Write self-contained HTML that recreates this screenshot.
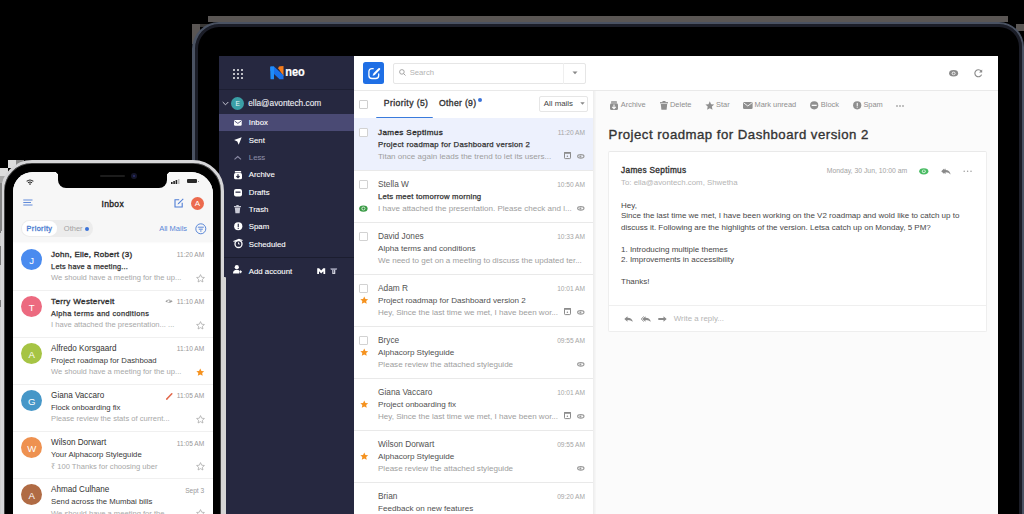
<!DOCTYPE html>
<html><head><meta charset="utf-8"><style>
html,body{margin:0;padding:0;background:#000;}
body{width:1024px;height:514px;position:relative;overflow:hidden;font-family:"Liberation Sans",sans-serif;}
.t{position:absolute;white-space:nowrap;line-height:1;}
svg{overflow:visible}
</style></head><body>
<div style="position:absolute;left:208px;top:16px;width:800px;height:6px;background:#5a5654"></div>
<div style="position:absolute;left:192px;top:24px;width:8px;height:20px;background:#5a5654"></div>
<div style="position:absolute;left:200px;top:24px;width:8px;height:3px;background:#3a3836"></div>
<div style="position:absolute;left:1016px;top:24px;width:8px;height:7px;background:#5a5654"></div>
<div style="position:absolute;left:192px;top:22px;width:827px;height:600px;border:2px solid #4a5262;border-left-width:3.5px;border-right-width:2.5px;border-radius:27px 25px 0 0;background:#000;box-shadow:inset 0 0 0 3px #1b1d27"></div>
<div style="position:absolute;left:219px;top:56px;width:135px;height:458px;background:#262840"></div>
<div style="position:absolute;left:219px;top:88.5px;width:135px;height:1.5px;background:#1d1f33"></div>
<svg style="position:absolute;left:233px;top:68.5px;" width="10" height="10" viewBox="0 0 10 10"><circle cx="1" cy="1" r="0.95" fill="#fff"/><circle cx="5" cy="1" r="0.95" fill="#fff"/><circle cx="9" cy="1" r="0.95" fill="#fff"/><circle cx="1" cy="5" r="0.95" fill="#fff"/><circle cx="5" cy="5" r="0.95" fill="#fff"/><circle cx="9" cy="5" r="0.95" fill="#fff"/><circle cx="1" cy="9" r="0.95" fill="#fff"/><circle cx="5" cy="9" r="0.95" fill="#fff"/><circle cx="9" cy="9" r="0.95" fill="#fff"/></svg>
<svg style="position:absolute;left:269.5px;top:65.5px;" width="14" height="14" viewBox="0 0 14 14"><path d="M8.3 2.2 Q8.3 0.5 10 0.3 L13.5 0.1 L13.5 10.2Z" fill="#f47c1c"/><path d="M0.3 0.6 L4 0.6 L13.5 9.3 L13.5 13.2 L9.6 13.2 L0.3 4.6Z" fill="#1a72ea"/><path d="M0.2 1.4 Q0.2 0.5 1.1 0.5 L4 0.5 L4 13.3 L1.2 13.3 Q0.5 13.3 0.5 12.4Z" fill="#1f8cf8"/></svg>
<div class="t" style="left:285.20px;top:67px;font-size:11.0px;color:#fff;font-weight:700;transform:scale(1.0,1.14);transform-origin:0 9px;-webkit-text-stroke:0.2px #fff">neo</div>
<svg style="position:absolute;left:222px;top:100.5px;" width="7" height="5" viewBox="0 0 7 5"><path d="M0.7 1 L3.5 3.8 L6.3 1" stroke="#c9cad6" stroke-width="1" fill="none"/></svg>
<div style="position:absolute;left:231.2px;top:96.8px;width:13px;height:13px;background:#3a9fa6;border-radius:50%"></div>
<div class="t" style="left:235.20px;top:101px;font-size:6.5px;color:#e9f6f6;font-weight:400;width:5px;text-align:center">E</div>
<div class="t" style="left:248.20px;top:99px;font-size:8.3px;color:#ececf2;font-weight:400;-webkit-text-stroke:0.12px #ececf2">ella@avontech.com</div>
<div style="position:absolute;left:219px;top:114px;width:135px;height:17.2px;background:#4a4a74"></div>
<div class="t" style="left:248.80px;top:119px;font-size:7.8px;color:#fff;font-weight:400;-webkit-text-stroke:0.1px #fff">Inbox</div>
<div class="t" style="left:248.80px;top:137px;font-size:7.8px;color:#fff;font-weight:400;-webkit-text-stroke:0.1px #fff">Sent</div>
<div class="t" style="left:248.80px;top:154px;font-size:7.8px;color:#8c8ca6;font-weight:400;-webkit-text-stroke:0.1px #8c8ca6">Less</div>
<div class="t" style="left:248.80px;top:171px;font-size:7.8px;color:#fff;font-weight:400;-webkit-text-stroke:0.1px #fff">Archive</div>
<div class="t" style="left:248.80px;top:189px;font-size:7.8px;color:#fff;font-weight:400;-webkit-text-stroke:0.1px #fff">Drafts</div>
<div class="t" style="left:248.80px;top:206px;font-size:7.8px;color:#fff;font-weight:400;-webkit-text-stroke:0.1px #fff">Trash</div>
<div class="t" style="left:248.80px;top:223px;font-size:7.8px;color:#fff;font-weight:400;-webkit-text-stroke:0.1px #fff">Spam</div>
<div class="t" style="left:248.80px;top:241px;font-size:7.8px;color:#fff;font-weight:400;-webkit-text-stroke:0.1px #fff">Scheduled</div>
<svg style="position:absolute;left:233.8px;top:120.2px;" width="8" height="6" viewBox="0 0 8 6"><rect x="0" y="0" width="7.7" height="5.7" rx="1.2" fill="#fff"/><path d="M0.6 1 L3.85 3.4 L7.1 1" stroke="#4a4a74" stroke-width="0.9" fill="none"/></svg>
<svg style="position:absolute;left:233.5px;top:136.5px;" width="8" height="8" viewBox="0 0 8 8"><path d="M7.7 0.2 L0.1 3.1 L3.3 4.5 L4.7 7.8Z" fill="#fff"/></svg>
<svg style="position:absolute;left:234px;top:155.5px;" width="8" height="4" viewBox="0 0 8 4"><path d="M0.5 3.4 L3.75 0.6 L7 3.4" stroke="#8c8ca6" stroke-width="1.1" fill="none"/></svg>
<svg style="position:absolute;left:233.5px;top:170.8px;" width="8" height="8.5" viewBox="0 0 8 8.5"><rect x="0.8" y="0" width="6.4" height="1.4" rx="0.5" fill="#fff"/><rect x="0" y="2" width="8" height="6.3" rx="1.5" fill="#fff"/><path d="M4 3.2 V6.6 M2.4 5.1 L4 6.7 L5.6 5.1" stroke="#262840" stroke-width="1.2" fill="none"/></svg>
<svg style="position:absolute;left:233.5px;top:188.8px;" width="8" height="7.5" viewBox="0 0 8 7.5"><rect x="0" y="0" width="8" height="7.4" rx="2" fill="#fff"/><rect x="1.5" y="2.4" width="5" height="1.6" fill="#5a5b70"/></svg>
<svg style="position:absolute;left:234px;top:204.8px;" width="7" height="8.5" viewBox="0 0 7 8.5"><rect x="0" y="1" width="7" height="1.2" fill="#c9cad6"/><rect x="2.3" y="0" width="2.4" height="1.2" fill="#c9cad6"/><path d="M0.8 2.6 H6.2 L5.6 8.3 H1.4Z" fill="#c9cad6"/></svg>
<svg style="position:absolute;left:233.5px;top:222px;" width="8.5" height="8.5" viewBox="0 0 8.5 8.5"><circle cx="4.25" cy="4.25" r="4.1" fill="#fff"/><rect x="3.7" y="1.7" width="1.1" height="3.3" fill="#262840"/><rect x="3.7" y="5.8" width="1.1" height="1.1" fill="#262840"/></svg>
<svg style="position:absolute;left:232.5px;top:239px;" width="10" height="9" viewBox="0 0 10 9"><circle cx="5.5" cy="5" r="3.5" stroke="#fff" stroke-width="1.3" fill="none"/><path d="M0.5 2.5 L6 0.5 L9.5 1.5" stroke="#fff" stroke-width="1.3" fill="none"/><path d="M5.5 3.3 V5 H6.8" stroke="#fff" stroke-width="0.9" fill="none"/></svg>
<div style="position:absolute;left:219px;top:256.8px;width:135px;height:1.2px;background:#1b1d2f"></div>
<div class="t" style="left:248.80px;top:268px;font-size:7.8px;color:#fff;font-weight:400;-webkit-text-stroke:0.1px #fff">Add account</div>
<svg style="position:absolute;left:233px;top:265px;" width="9" height="9" viewBox="0 0 9 9"><circle cx="3.8" cy="2.2" r="2.1" fill="#fff"/><path d="M0 8.5 Q0 4.8 3.8 4.8 Q5.5 4.8 6.3 5.6 L6.3 8.5Z" fill="#fff"/><path d="M6.2 6.8 H9 M7.6 5.4 V8.2" stroke="#fff" stroke-width="1"/></svg>
<svg style="position:absolute;left:316.7px;top:268px;" width="9" height="7" viewBox="0 0 9 7"><path d="M0.2 6.1 V0.2 H2.1 L4.2 2.6 L6.3 0.2 H8.2 V6.1 H6.4 V3.2 L4.2 5.4 L2 3.2 V6.1Z" fill="#fff"/></svg>
<svg style="position:absolute;left:329.9px;top:268.2px;" width="8" height="6" viewBox="0 0 8 6"><path d="M0.3 0.2 H7.2 L6.6 1.9 H0.9Z" fill="#9a9bb0"/><rect x="2.2" y="1.9" width="1.3" height="3.9" fill="#c9cad8"/><rect x="4" y="1.9" width="1.3" height="3.9" fill="#c9cad8"/><path d="M2.2 5.8 H5.3 L3.75 4.8Z" fill="#fff"/></svg>
<div style="position:absolute;left:354px;top:56px;width:644px;height:34px;background:#fff"></div>
<div style="position:absolute;left:354px;top:90px;width:644px;height:1px;background:#e9e9e9"></div>
<div style="position:absolute;left:363px;top:62px;width:21px;height:22px;background:#1f6fe5;border-radius:2.5px"></div>
<svg style="position:absolute;left:367px;top:66px;" width="14" height="14" viewBox="0 0 14 14"><path d="M6.2 2.7 H5 Q1.9 2.7 1.9 5.8 V9.4 Q1.9 12.5 5 12.5 H8.6 Q11.7 12.5 11.7 9.4 V8" stroke="#fff" stroke-width="1.3" fill="none" stroke-linecap="round"/><path d="M7.3 7.9 L12.2 3" stroke="#fff" stroke-width="2.1" stroke-linecap="round"/><path d="M5.6 9.7 L6.1 7.7 L7.6 9.2Z" fill="#fff"/></svg>
<div style="position:absolute;left:393px;top:62.5px;width:192.5px;height:21px;border:1px solid #e6e6e6;border-radius:2px;box-sizing:border-box"></div>
<div style="position:absolute;left:563.2px;top:63px;width:1px;height:20.5px;background:#efefef"></div>
<svg style="position:absolute;left:571.5px;top:70.5px;" width="6" height="4" viewBox="0 0 6 4"><path d="M0.5 0.5 H5.5 L3 3.3Z" fill="#888"/></svg>
<svg style="position:absolute;left:399px;top:69px;" width="7" height="7" viewBox="0 0 7 7"><circle cx="2.9" cy="2.9" r="2.3" stroke="#9a9a9a" stroke-width="0.9" fill="none"/><path d="M4.6 4.6 L6.5 6.5" stroke="#9a9a9a" stroke-width="0.9"/></svg>
<div class="t" style="left:409.70px;top:69px;font-size:7.7px;color:#b3b3b3;font-weight:400;">Search</div>
<svg style="position:absolute;left:948.8px;top:70px;" width="10" height="7" viewBox="0 0 10 7"><ellipse cx="4.6" cy="3.3" rx="4.5" ry="3.2" fill="#8a8a8a"/><circle cx="4.6" cy="3.3" r="1.9" fill="#e8e8e8"/><circle cx="4.6" cy="3.5" r="1" fill="#8a8a8a"/></svg>
<svg style="position:absolute;left:974.3px;top:69.3px;" width="9" height="9" viewBox="0 0 9 9"><path d="M7.2 2.2 A3.5 3.5 0 1 0 7.6 5.6" stroke="#8a8a8a" stroke-width="1.15" fill="none"/><path d="M8.2 0.4 V3.6 H5Z" fill="#8a8a8a"/></svg>
<div style="position:absolute;left:354px;top:91px;width:240px;height:423px;background:#fff"></div>
<div style="position:absolute;left:359.3px;top:100px;width:8.7px;height:8.7px;border:1px solid #cfcfcf;border-radius:1px;box-sizing:border-box"></div>
<div class="t" style="left:383.80px;top:99px;font-size:8.6px;color:#333;font-weight:400;letter-spacing:0.413px;-webkit-text-stroke:0.35px #333;">Priority (5)</div>
<div class="t" style="left:439.10px;top:99px;font-size:8.6px;color:#333;font-weight:400;letter-spacing:0.324px;-webkit-text-stroke:0.35px #333;">Other (9)</div>
<div style="position:absolute;left:477.5px;top:98px;width:4px;height:4px;background:#3b73d9;border-radius:50%"></div>
<div style="position:absolute;left:376px;top:116.5px;width:56.7px;height:2px;background:#3a7bdc;border-radius:1px"></div>
<div style="position:absolute;left:539.2px;top:95.5px;width:48.5px;height:16px;border:1px solid #e6e6e6;border-radius:2px;box-sizing:border-box"></div>
<div class="t" style="left:543.70px;top:100px;font-size:7.9px;color:#444;font-weight:400;">All mails</div>
<svg style="position:absolute;left:579.5px;top:102px;" width="5" height="3" viewBox="0 0 5 3"><path d="M0.3 0.3 H4.7 L2.5 2.7Z" fill="#888"/></svg>
<div style="position:absolute;left:354px;top:118.4px;width:239.5px;height:51.6px;background:#edf1fd"></div>
<div style="position:absolute;left:354px;top:170.0px;width:239.5px;height:0.8px;background:#e9e9e9"></div>
<div style="position:absolute;left:359.3px;top:128.40px;width:8.6px;height:8.4px;border:1px solid #d2d2d2;border-radius:1px;box-sizing:border-box;background:#fff"></div>
<div class="t" style="left:378.00px;top:129px;font-size:8.1px;color:#333;font-weight:400;letter-spacing:0.379px;-webkit-text-stroke:0.35px #333;">James Septimus</div>
<div class="t" style="right:439.00px;text-align:right;top:130px;font-size:6.6px;color:#a6a6a6;font-weight:400;">11:20 AM</div>
<div class="t" style="left:378.00px;top:141px;font-size:7.75px;color:#333;font-weight:400;letter-spacing:0.268px;-webkit-text-stroke:0.25px #333;">Project roadmap for Dashboard version 2</div>
<div class="t" style="left:378.00px;top:153px;font-size:8.05px;color:#9e9e9e;font-weight:400;">Titan once again leads the trend to let its users...</div>
<svg style="position:absolute;left:564px;top:152.1px;" width="7" height="7" viewBox="0 0 7 7"><rect x="0.5" y="0.6" width="6" height="6" rx="0.8" stroke="#8a8a8a" stroke-width="1" fill="none"/><rect x="0" y="0.1" width="7" height="1.7" rx="0.6" fill="#8a8a8a"/><circle cx="3.4" cy="4.3" r="0.75" fill="#8a8a8a"/></svg>
<svg style="position:absolute;left:576.6px;top:153.7px;" width="8" height="5" viewBox="0 0 8 5"><ellipse cx="3.8" cy="2.35" rx="3.2" ry="1.75" stroke="#9a9a9a" stroke-width="1.1" fill="none"/><circle cx="3.4" cy="2.5" r="1" fill="#9a9a9a"/></svg>
<div style="position:absolute;left:354px;top:222.0px;width:239.5px;height:0.8px;background:#e9e9e9"></div>
<div style="position:absolute;left:359.3px;top:180.40px;width:8.6px;height:8.4px;border:1px solid #d2d2d2;border-radius:1px;box-sizing:border-box;background:#fff"></div>
<div class="t" style="left:378.00px;top:180px;font-size:8.3px;color:#525252;font-weight:400;">Stella W</div>
<div class="t" style="right:439.00px;text-align:right;top:182px;font-size:6.6px;color:#a6a6a6;font-weight:400;">10:50 AM</div>
<div class="t" style="left:378.00px;top:193px;font-size:7.75px;color:#333;font-weight:400;letter-spacing:0.182px;-webkit-text-stroke:0.25px #333;">Lets meet tomorrow morning</div>
<div class="t" style="left:378.00px;top:205px;font-size:8.05px;color:#9e9e9e;font-weight:400;">I have attached the presentation. Please check and l...</div>
<svg style="position:absolute;left:359.3px;top:204.5px;" width="9" height="7" viewBox="0 0 9 7"><ellipse cx="4.4" cy="3.6" rx="4.2" ry="3.2" fill="#389a44"/><circle cx="4.4" cy="3.6" r="2" fill="#c8e6c9"/><circle cx="4.5" cy="3.6" r="1.1" fill="#2f8a3b"/></svg>
<svg style="position:absolute;left:576.6px;top:205.7px;" width="8" height="5" viewBox="0 0 8 5"><ellipse cx="3.8" cy="2.35" rx="3.2" ry="1.75" stroke="#9a9a9a" stroke-width="1.1" fill="none"/><circle cx="3.4" cy="2.5" r="1" fill="#9a9a9a"/></svg>
<div style="position:absolute;left:354px;top:274.0px;width:239.5px;height:0.8px;background:#e9e9e9"></div>
<div style="position:absolute;left:359.3px;top:232.40px;width:8.6px;height:8.4px;border:1px solid #d2d2d2;border-radius:1px;box-sizing:border-box;background:#fff"></div>
<div class="t" style="left:378.00px;top:232px;font-size:8.3px;color:#525252;font-weight:400;">David Jones</div>
<div class="t" style="right:439.00px;text-align:right;top:234px;font-size:6.6px;color:#a6a6a6;font-weight:400;">10:33 AM</div>
<div class="t" style="left:378.00px;top:245px;font-size:8.08px;color:#505050;font-weight:400;">Alpha terms and conditions</div>
<div class="t" style="left:378.00px;top:257px;font-size:8.05px;color:#9e9e9e;font-weight:400;">We need to get on a meeting to discuss the updated ter...</div>
<div style="position:absolute;left:354px;top:326.0px;width:239.5px;height:0.8px;background:#e9e9e9"></div>
<div style="position:absolute;left:359.3px;top:284.40px;width:8.6px;height:8.4px;border:1px solid #d2d2d2;border-radius:1px;box-sizing:border-box;background:#fff"></div>
<div class="t" style="left:378.00px;top:284px;font-size:8.3px;color:#525252;font-weight:400;">Adam R</div>
<div class="t" style="right:439.00px;text-align:right;top:286px;font-size:6.6px;color:#a6a6a6;font-weight:400;">10:01 AM</div>
<div class="t" style="left:378.00px;top:297px;font-size:8.08px;color:#505050;font-weight:400;">Project roadmap for Dashboard version 2</div>
<div class="t" style="left:378.00px;top:309px;font-size:8.05px;color:#9e9e9e;font-weight:400;">Hey, Since the last time we met, I have been wor...</div>
<svg style="position:absolute;left:359.5px;top:296.2px;" width="9" height="9" viewBox="0 0 9 9"><path d="M4.25 0.4 L5.45 2.95 L8.2 3.25 L6.15 5.1 L6.7 7.8 L4.25 6.4 L1.8 7.8 L2.35 5.1 L0.3 3.25 L3.05 2.95Z" fill="#f5921f"/></svg>
<svg style="position:absolute;left:564px;top:308.09999999999997px;" width="7" height="7" viewBox="0 0 7 7"><rect x="0.5" y="0.6" width="6" height="6" rx="0.8" stroke="#8a8a8a" stroke-width="1" fill="none"/><rect x="0" y="0.1" width="7" height="1.7" rx="0.6" fill="#8a8a8a"/><circle cx="3.4" cy="4.3" r="0.75" fill="#8a8a8a"/></svg>
<svg style="position:absolute;left:576.6px;top:309.7px;" width="8" height="5" viewBox="0 0 8 5"><ellipse cx="3.8" cy="2.35" rx="3.2" ry="1.75" stroke="#9a9a9a" stroke-width="1.1" fill="none"/><circle cx="3.4" cy="2.5" r="1" fill="#9a9a9a"/></svg>
<div style="position:absolute;left:354px;top:378.0px;width:239.5px;height:0.8px;background:#e9e9e9"></div>
<div style="position:absolute;left:359.3px;top:336.40px;width:8.6px;height:8.4px;border:1px solid #d2d2d2;border-radius:1px;box-sizing:border-box;background:#fff"></div>
<div class="t" style="left:378.00px;top:336px;font-size:8.3px;color:#525252;font-weight:400;">Bryce</div>
<div class="t" style="right:439.00px;text-align:right;top:338px;font-size:6.6px;color:#a6a6a6;font-weight:400;">09:55 AM</div>
<div class="t" style="left:378.00px;top:349px;font-size:8.08px;color:#505050;font-weight:400;">Alphacorp Styleguide</div>
<div class="t" style="left:378.00px;top:361px;font-size:8.05px;color:#9e9e9e;font-weight:400;">Please review the attached styleguide</div>
<svg style="position:absolute;left:359.5px;top:348.2px;" width="9" height="9" viewBox="0 0 9 9"><path d="M4.25 0.4 L5.45 2.95 L8.2 3.25 L6.15 5.1 L6.7 7.8 L4.25 6.4 L1.8 7.8 L2.35 5.1 L0.3 3.25 L3.05 2.95Z" fill="#f5921f"/></svg>
<svg style="position:absolute;left:576.6px;top:361.7px;" width="8" height="5" viewBox="0 0 8 5"><ellipse cx="3.8" cy="2.35" rx="3.2" ry="1.75" stroke="#9a9a9a" stroke-width="1.1" fill="none"/><circle cx="3.4" cy="2.5" r="1" fill="#9a9a9a"/></svg>
<div style="position:absolute;left:354px;top:430.0px;width:239.5px;height:0.8px;background:#e9e9e9"></div>
<div class="t" style="left:378.00px;top:388px;font-size:8.3px;color:#525252;font-weight:400;">Giana Vaccaro</div>
<div class="t" style="right:439.00px;text-align:right;top:390px;font-size:6.6px;color:#a6a6a6;font-weight:400;">10:01 AM</div>
<div class="t" style="left:378.00px;top:401px;font-size:8.08px;color:#505050;font-weight:400;">Project onboarding fix</div>
<div class="t" style="left:378.00px;top:413px;font-size:8.05px;color:#9e9e9e;font-weight:400;">Hey, Since the last time we met, I have been wor...</div>
<svg style="position:absolute;left:359.5px;top:400.2px;" width="9" height="9" viewBox="0 0 9 9"><path d="M4.25 0.4 L5.45 2.95 L8.2 3.25 L6.15 5.1 L6.7 7.8 L4.25 6.4 L1.8 7.8 L2.35 5.1 L0.3 3.25 L3.05 2.95Z" fill="#f5921f"/></svg>
<svg style="position:absolute;left:564px;top:412.09999999999997px;" width="7" height="7" viewBox="0 0 7 7"><rect x="0.5" y="0.6" width="6" height="6" rx="0.8" stroke="#8a8a8a" stroke-width="1" fill="none"/><rect x="0" y="0.1" width="7" height="1.7" rx="0.6" fill="#8a8a8a"/><circle cx="3.4" cy="4.3" r="0.75" fill="#8a8a8a"/></svg>
<svg style="position:absolute;left:576.6px;top:413.7px;" width="8" height="5" viewBox="0 0 8 5"><ellipse cx="3.8" cy="2.35" rx="3.2" ry="1.75" stroke="#9a9a9a" stroke-width="1.1" fill="none"/><circle cx="3.4" cy="2.5" r="1" fill="#9a9a9a"/></svg>
<div style="position:absolute;left:354px;top:482.0px;width:239.5px;height:0.8px;background:#e9e9e9"></div>
<div class="t" style="left:378.00px;top:440px;font-size:8.3px;color:#525252;font-weight:400;">Wilson Dorwart</div>
<div class="t" style="right:439.00px;text-align:right;top:442px;font-size:6.6px;color:#a6a6a6;font-weight:400;">09:55 AM</div>
<div class="t" style="left:378.00px;top:453px;font-size:8.08px;color:#505050;font-weight:400;">Alphacorp Styleguide</div>
<div class="t" style="left:378.00px;top:465px;font-size:8.05px;color:#9e9e9e;font-weight:400;">Please review the attached styleguide</div>
<svg style="position:absolute;left:359.5px;top:452.2px;" width="9" height="9" viewBox="0 0 9 9"><path d="M4.25 0.4 L5.45 2.95 L8.2 3.25 L6.15 5.1 L6.7 7.8 L4.25 6.4 L1.8 7.8 L2.35 5.1 L0.3 3.25 L3.05 2.95Z" fill="#f5921f"/></svg>
<svg style="position:absolute;left:576.6px;top:465.7px;" width="8" height="5" viewBox="0 0 8 5"><ellipse cx="3.8" cy="2.35" rx="3.2" ry="1.75" stroke="#9a9a9a" stroke-width="1.1" fill="none"/><circle cx="3.4" cy="2.5" r="1" fill="#9a9a9a"/></svg>
<div style="position:absolute;left:354px;top:534.0px;width:239.5px;height:0.8px;background:#e9e9e9"></div>
<div class="t" style="left:378.00px;top:492px;font-size:8.3px;color:#525252;font-weight:400;">Brian</div>
<div class="t" style="right:439.00px;text-align:right;top:494px;font-size:6.6px;color:#a6a6a6;font-weight:400;">09:20 AM</div>
<div class="t" style="left:378.00px;top:505px;font-size:8.08px;color:#505050;font-weight:400;">Feedback on new features</div>
<div class="t" style="left:378.00px;top:517px;font-size:8.05px;color:#9e9e9e;font-weight:400;">Please review the attached styleguide</div>
<div style="position:absolute;left:593.3px;top:91px;width:404.7px;height:423px;background:#fbfbfb"></div>
<div style="position:absolute;left:593.3px;top:91px;width:2.7px;height:423px;background:linear-gradient(to right,#ececec,#f8f8f8)"></div>
<svg style="position:absolute;left:610.1px;top:100.5px;" width="10" height="10" viewBox="0 0 10 10"><rect x="1" y="0.3" width="6" height="1.5" rx="0.6" fill="#8f8f8f"/><rect x="0" y="2.2" width="8" height="6.8" rx="1.5" fill="#8f8f8f"/><path d="M4 3.4 V7.6 M2.2 5.9 L4 7.7 L5.8 5.9" stroke="#fafafa" stroke-width="1.1" fill="none"/></svg>
<div class="t" style="left:620.80px;top:101px;font-size:7.45px;color:#8f8f8f;font-weight:400;">Archive</div>
<svg style="position:absolute;left:659.7px;top:100.5px;" width="10" height="10" viewBox="0 0 10 10"><rect x="0" y="1.1" width="8" height="1.3" fill="#8f8f8f"/><rect x="2.5" y="0" width="3" height="1.3" fill="#8f8f8f"/><path d="M0.8 3 H7.2 L6.6 8.8 H1.4Z" fill="#8f8f8f"/></svg>
<div class="t" style="left:670.00px;top:101px;font-size:7.45px;color:#8f8f8f;font-weight:400;">Delete</div>
<svg style="position:absolute;left:704.8px;top:100.5px;" width="10" height="10" viewBox="0 0 10 10"><path d="M4.8 0.3 L6.1 3.2 L9.2 3.5 L6.9 5.6 L7.5 8.8 L4.8 7.2 L2.1 8.8 L2.7 5.6 L0.4 3.5 L3.5 3.2Z" fill="#8f8f8f"/></svg>
<div class="t" style="left:716.10px;top:101px;font-size:7.45px;color:#8f8f8f;font-weight:400;">Star</div>
<svg style="position:absolute;left:742.8px;top:100.5px;" width="10" height="10" viewBox="0 0 10 10"><rect x="0" y="1" width="9.6" height="7" rx="1.2" fill="#8f8f8f"/><path d="M0.6 1.8 L4.8 5 L9 1.8" stroke="#f9f9f9" stroke-width="0.9" fill="none"/></svg>
<div class="t" style="left:754.50px;top:101px;font-size:7.45px;color:#8f8f8f;font-weight:400;">Mark unread</div>
<svg style="position:absolute;left:810px;top:100.5px;" width="10" height="10" viewBox="0 0 10 10"><circle cx="4.2" cy="4.3" r="4.1" fill="#8f8f8f"/><rect x="1.7" y="3.7" width="5" height="1.3" fill="#f9f9f9"/></svg>
<div class="t" style="left:820.80px;top:101px;font-size:7.45px;color:#8f8f8f;font-weight:400;">Block</div>
<svg style="position:absolute;left:852.5px;top:100.5px;" width="10" height="10" viewBox="0 0 10 10"><circle cx="4.2" cy="4.3" r="4.1" fill="#8f8f8f"/><rect x="3.7" y="1.9" width="1.1" height="3.1" fill="#f9f9f9"/><rect x="3.7" y="5.6" width="1.1" height="1.1" fill="#f9f9f9"/></svg>
<div class="t" style="left:863.40px;top:101px;font-size:7.45px;color:#8f8f8f;font-weight:400;">Spam</div>
<svg style="position:absolute;left:896px;top:104.5px;" width="8" height="2" viewBox="0 0 8 2"><circle cx="1" cy="1" r="0.8" fill="#777"/><circle cx="4" cy="1" r="0.8" fill="#777"/><circle cx="7" cy="1" r="0.8" fill="#777"/></svg>
<div class="t" style="left:608.60px;top:128px;font-size:13.2px;color:#333;font-weight:400;letter-spacing:0.487px;-webkit-text-stroke:0.35px #333;">Project roadmap for Dashboard version 2</div>
<div style="position:absolute;left:608px;top:151px;width:378.5px;height:180.5px;background:#fff;border:1px solid #eeeeee;border-top-color:#e9e9e9;border-radius:2px;box-sizing:border-box"></div>
<div class="t" style="left:621.10px;top:167px;font-size:8.25px;color:#333;font-weight:400;letter-spacing:0.309px;-webkit-text-stroke:0.35px #333;">James Septimus</div>
<div class="t" style="left:621.00px;top:179px;font-size:7.85px;color:#b5b5b5;font-weight:400;">To: ella@avontech.com, Shwetha</div>
<div class="t" style="right:116.70px;text-align:right;top:168px;font-size:6.85px;color:#a3a3a3;font-weight:400;">Monday, 30 Jun, 10:00 am</div>
<svg style="position:absolute;left:919px;top:167.8px;" width="10" height="7" viewBox="0 0 10 7"><ellipse cx="4.8" cy="3.3" rx="4.6" ry="3.1" fill="#48bb62"/><circle cx="4.8" cy="3.3" r="1.9" fill="#d4f0da"/><circle cx="4.8" cy="3.3" r="1.05" fill="#48bb62"/></svg>
<svg style="position:absolute;left:941px;top:167.8px;" width="10" height="7" viewBox="0 0 10 7"><path d="M4.6 0.4 L1.4 3.2 L4.6 6 V4.3 Q7.6 4.2 9.6 6.6 Q9 2.2 4.6 2Z" fill="#8a8a8a"/><path d="M3.2 0.4 L0.2 3.2 L3.2 6 Z" fill="#8a8a8a"/></svg>
<svg style="position:absolute;left:963px;top:170px;" width="10" height="2.5" viewBox="0 0 10 2.5"><circle cx="1.2" cy="1.2" r="0.75" fill="#9a9a9a"/><circle cx="4.6" cy="1.2" r="0.75" fill="#9a9a9a"/><circle cx="8" cy="1.2" r="0.75" fill="#9a9a9a"/></svg>
<div class="t" style="left:621.00px;top:202px;font-size:8.0px;color:#474747;font-weight:400;">Hey,</div>
<div class="t" style="left:621.00px;top:212px;font-size:8.0px;color:#474747;font-weight:400;">Since the last time we met, I have been working on the V2 roadmap and wold like to catch up to</div>
<div class="t" style="left:621.00px;top:224px;font-size:8.0px;color:#474747;font-weight:400;">discuss it. Following are the highlights of the version. Letsa catch up on Monday, 5 PM?</div>
<div class="t" style="left:621.00px;top:246px;font-size:8.0px;color:#474747;font-weight:400;">1. Introducing multiple themes</div>
<div class="t" style="left:621.00px;top:256px;font-size:8.0px;color:#474747;font-weight:400;">2. Improvements in accessibility</div>
<div class="t" style="left:621.00px;top:278px;font-size:8.0px;color:#474747;font-weight:400;">Thanks!</div>
<div style="position:absolute;left:609px;top:305.3px;width:376.5px;height:1px;background:#efefef"></div>
<svg style="position:absolute;left:624px;top:315.8px;" width="9" height="6" viewBox="0 0 9 6"><path d="M3.5 0.3 L0.3 3 L3.5 5.7 V4 Q6.8 3.9 8.8 5.8 Q8 1.9 3.5 1.8Z" fill="#8a8a8a"/></svg>
<svg style="position:absolute;left:641px;top:315.8px;" width="10" height="6" viewBox="0 0 10 6"><path d="M4.5 0.3 L1.3 3 L4.5 5.7 V4 Q7.8 3.9 9.8 5.8 Q9 1.9 4.5 1.8Z" fill="#8a8a8a"/><path d="M2.8 0.5 L0.2 3 L2.8 5.5" stroke="#8a8a8a" stroke-width="0.9" fill="none"/></svg>
<svg style="position:absolute;left:658.3px;top:315.8px;" width="9" height="6" viewBox="0 0 9 6"><path d="M5.5 0.3 L8.7 3 L5.5 5.7 V4 H0.3 V2 H5.5Z" fill="#8a8a8a"/></svg>
<div class="t" style="left:673.80px;top:315px;font-size:7.9px;color:#b5b5b5;font-weight:400;">Write a reply...</div>
<div style="position:absolute;left:8px;top:160px;width:8px;height:8px;background:#dcdcdc"></div>
<div style="position:absolute;left:16px;top:160px;width:8px;height:4px;background:#8a8a8a"></div>
<div style="position:absolute;left:0px;top:168px;width:8px;height:8px;background:#dcdcdc"></div>
<div style="position:absolute;left:0px;top:176px;width:4.5px;height:7.5px;background:#a8a8a8"></div>
<div style="position:absolute;left:0px;top:183.4px;width:4px;height:340px;background:#cfcfcf"></div>
<div style="position:absolute;left:1.2px;top:160px;width:223.1px;height:420px;border:3px solid #d6d6d8;border-radius:31px;background:#000;box-sizing:border-box;box-shadow:inset 0 0 0 0.8px #555"></div>
<div style="position:absolute;left:221px;top:277px;width:5px;height:240px;background:#d5d5d5;border-radius:1px"></div>
<div style="position:absolute;left:12.9px;top:171.6px;width:200px;height:400px;border-radius:20px 22px 0 0;background:#fff;overflow:hidden">
<div style="position:absolute;left:0;top:0;width:200px;height:70px;background:#f7f7f7;box-shadow:0 1px 2px rgba(0,0,0,0.025)"></div>
</div>
<div style="position:absolute;left:58.3px;top:168px;width:108.9px;height:19.6px;background:#000;border-radius:0 0 8px 8px"></div>
<div style="position:absolute;left:55.3px;top:171.6px;width:3px;height:3px;background:radial-gradient(circle at 0 100%, transparent 2.6px, #000 3px)"></div>
<div style="position:absolute;left:167.2px;top:171.6px;width:3px;height:3px;background:radial-gradient(circle at 100% 100%, transparent 2.6px, #000 3px)"></div>
<div style="position:absolute;left:100px;top:174.8px;width:25px;height:2.4px;background:#1c1c1c;border-radius:1.2px"></div>
<div style="position:absolute;left:131px;top:173px;width:6px;height:6px;background:#15162a;border-radius:50%"></div>
<div style="position:absolute;left:133px;top:175px;width:2px;height:2px;background:#2a3070;border-radius:50%"></div>
<svg style="position:absolute;left:26px;top:178.5px;" width="8" height="6" viewBox="0 0 8 6"><path d="M0.3 2 Q4 -1 7.7 2 L7 2.8 Q4 0.4 1 2.8Z M1.7 3.4 Q4 1.5 6.3 3.4 L5.6 4.2 Q4 3 2.4 4.2Z" fill="#222"/><circle cx="4" cy="5.1" r="0.8" fill="#222"/></svg>
<svg style="position:absolute;left:171px;top:179px;" width="9" height="5" viewBox="0 0 9 5"><rect x="0" y="3" width="1.6" height="2" fill="#222"/><rect x="2.3" y="2" width="1.6" height="3" fill="#222"/><rect x="4.6" y="1" width="1.6" height="4" fill="#222"/><rect x="6.9" y="0" width="1.6" height="5" fill="#bbb"/></svg>
<div style="position:absolute;left:186.6px;top:179.3px;width:10.5px;height:3.8px;background:#2a2a2a;border-radius:1px"></div>
<div style="position:absolute;left:197.5px;top:180.5px;width:1px;height:1.5px;background:#888"></div>
<svg style="position:absolute;left:22.5px;top:199px;" width="10" height="7" viewBox="0 0 10 7"><path d="M0.3 1 H9.5 M0.3 3.5 H8 M0.3 6 H9.5" stroke="#4f7ed6" stroke-width="0.9"/></svg>
<div class="t" style="left:101.40px;top:200px;font-size:8.5px;color:#222;font-weight:400;letter-spacing:0.377px;-webkit-text-stroke:0.35px #222;">Inbox</div>
<svg style="position:absolute;left:173.5px;top:197.5px;" width="10" height="10" viewBox="0 0 10 10"><path d="M5.2 1.8 H1 V9 H8.2 V4.8" stroke="#4f7ed6" stroke-width="1.1" fill="none"/><path d="M8.9 0.5 L9.6 1.2 L4.8 6 L3.6 6.4 L4 5.2Z" fill="#4f7ed6"/></svg>
<div style="position:absolute;left:191px;top:196.5px;width:13px;height:13px;background:#ec6a4e;border-radius:50%"></div>
<div class="t" style="left:193.50px;top:200px;font-size:8px;color:#fff;font-weight:400;width:8px;text-align:center">A</div>
<div style="position:absolute;left:21.3px;top:220.3px;width:72.2px;height:16.6px;background:#ececec;border-radius:8.3px"></div>
<div style="position:absolute;left:22.3px;top:221.3px;width:34.7px;height:14.6px;background:#fff;border-radius:7.3px"></div>
<div class="t" style="left:26.60px;top:225px;font-size:7.3px;color:#4a7bd0;font-weight:400;letter-spacing:0.384px;-webkit-text-stroke:0.3px #4a7bd0;">Priority</div>
<div class="t" style="left:63.80px;top:225px;font-size:7.5px;color:#a3a3a3;font-weight:400;">Other</div>
<div style="position:absolute;left:85px;top:226.6px;width:4px;height:4px;background:#3b73d9;border-radius:50%"></div>
<div class="t" style="left:159.20px;top:225px;font-size:7.5px;color:#5a87d8;font-weight:400;">All Mails</div>
<svg style="position:absolute;left:195px;top:222.5px;" width="12" height="12" viewBox="0 0 12 12"><circle cx="5.8" cy="5.8" r="5" stroke="#5a87d8" stroke-width="1" fill="none"/><path d="M2.8 4.2 H8.8 M3.8 6.2 H7.8 M5 8 H6.6" stroke="#5a87d8" stroke-width="1"/></svg>
<div style="position:absolute;left:21.1px;top:248.7px;width:21px;height:21px;background:#4a8bef;border-radius:50%"></div>
<div class="t" style="left:21.20px;top:256px;font-size:9.6px;color:#fff;font-weight:400;width:21px;text-align:center">J</div>
<div class="t" style="left:51.10px;top:251px;font-size:8.05px;color:#333;font-weight:400;letter-spacing:0.235px;-webkit-text-stroke:0.35px #333;">John, Elle, Robert (3)</div>
<div class="t" style="right:819.80px;text-align:right;top:252px;font-size:6.6px;color:#999;font-weight:400;">11:20 AM</div>
<div class="t" style="left:51.10px;top:263px;font-size:7.35px;color:#333;font-weight:400;letter-spacing:0.213px;-webkit-text-stroke:0.25px #333;">Lets have a meeting...</div>
<div class="t" style="left:51.10px;top:274px;font-size:7.6px;color:#a8a8a8;font-weight:400;">We should have a meeting for the up...</div>
<svg style="position:absolute;left:195.6px;top:273.59999999999997px;" width="9" height="9" viewBox="0 0 9 9"><path d="M4.5 0.6 L5.7 3.2 L8.4 3.5 L6.4 5.3 L6.9 8 L4.5 6.6 L2.1 8 L2.6 5.3 L0.6 3.5 L3.3 3.2Z" fill="none" stroke="#a0a0a0" stroke-width="0.7"/></svg>
<div style="position:absolute;left:12.5px;top:289.59999999999997px;width:200.5px;height:0.8px;background:#f0f0f0"></div>
<div style="position:absolute;left:21.1px;top:295.8px;width:21px;height:21px;background:#ec6a80;border-radius:50%"></div>
<div class="t" style="left:21.20px;top:303px;font-size:9.6px;color:#fff;font-weight:400;width:21px;text-align:center">T</div>
<div class="t" style="left:51.10px;top:298px;font-size:8.05px;color:#333;font-weight:400;letter-spacing:0.347px;-webkit-text-stroke:0.35px #333;">Terry Westervelt</div>
<div class="t" style="right:819.80px;text-align:right;top:299px;font-size:6.6px;color:#999;font-weight:400;">11:10 AM</div>
<div class="t" style="left:51.10px;top:310px;font-size:7.35px;color:#333;font-weight:400;letter-spacing:0.366px;-webkit-text-stroke:0.25px #333;">Alpha terms and conditions</div>
<div class="t" style="left:51.10px;top:321px;font-size:7.6px;color:#a8a8a8;font-weight:400;">I have attached the presentation... ...</div>
<svg style="position:absolute;left:195.6px;top:320.7px;" width="9" height="9" viewBox="0 0 9 9"><path d="M4.5 0.6 L5.7 3.2 L8.4 3.5 L6.4 5.3 L6.9 8 L4.5 6.6 L2.1 8 L2.6 5.3 L0.6 3.5 L3.3 3.2Z" fill="none" stroke="#a0a0a0" stroke-width="0.7"/></svg>
<svg style="position:absolute;left:165px;top:298.8px;" width="8" height="5" viewBox="0 0 8 5"><path d="M0.3 2.2 Q4 -1 7.7 2.2 Q4 5.4 0.3 2.2Z" fill="#9a9a9a"/><circle cx="3.3" cy="2.3" r="1" fill="#fff"/><path d="M1 4.4 L7 0.2" stroke="#fff" stroke-width="0.6"/></svg>
<div style="position:absolute;left:12.5px;top:336.7px;width:200.5px;height:0.8px;background:#f0f0f0"></div>
<div style="position:absolute;left:21.1px;top:342.9px;width:21px;height:21px;background:#a6c444;border-radius:50%"></div>
<div class="t" style="left:21.20px;top:350px;font-size:9.6px;color:#fff;font-weight:400;width:21px;text-align:center">A</div>
<div class="t" style="left:51.10px;top:345px;font-size:8.15px;color:#333;font-weight:400;">Alfredo Korsgaard</div>
<div class="t" style="right:819.80px;text-align:right;top:346px;font-size:6.6px;color:#999;font-weight:400;">11:10 AM</div>
<div class="t" style="left:51.10px;top:357px;font-size:7.75px;color:#3a3a3a;font-weight:400;">Project roadmap for Dashboad</div>
<div class="t" style="left:51.10px;top:368px;font-size:7.6px;color:#a8a8a8;font-weight:400;">We should have a meeting for the up...</div>
<svg style="position:absolute;left:195.6px;top:367.79999999999995px;" width="9" height="9" viewBox="0 0 9 9"><path d="M4.25 0.4 L5.45 2.95 L8.2 3.25 L6.15 5.1 L6.7 7.8 L4.25 6.4 L1.8 7.8 L2.35 5.1 L0.3 3.25 L3.05 2.95Z" fill="#f5921f"/></svg>
<div style="position:absolute;left:12.5px;top:383.79999999999995px;width:200.5px;height:0.8px;background:#f0f0f0"></div>
<div style="position:absolute;left:21.1px;top:390.0px;width:21px;height:21px;background:#4697c8;border-radius:50%"></div>
<div class="t" style="left:21.20px;top:397px;font-size:9.6px;color:#fff;font-weight:400;width:21px;text-align:center">G</div>
<div class="t" style="left:51.10px;top:392px;font-size:8.15px;color:#333;font-weight:400;">Giana Vaccaro</div>
<div class="t" style="right:819.80px;text-align:right;top:393px;font-size:6.6px;color:#999;font-weight:400;">11:05 AM</div>
<div class="t" style="left:51.10px;top:404px;font-size:7.75px;color:#3a3a3a;font-weight:400;">Flock onboarding fix</div>
<div class="t" style="left:51.10px;top:415px;font-size:7.6px;color:#a8a8a8;font-weight:400;">Please review the stats of current...</div>
<svg style="position:absolute;left:195.6px;top:414.9px;" width="9" height="9" viewBox="0 0 9 9"><path d="M4.5 0.6 L5.7 3.2 L8.4 3.5 L6.4 5.3 L6.9 8 L4.5 6.6 L2.1 8 L2.6 5.3 L0.6 3.5 L3.3 3.2Z" fill="none" stroke="#a0a0a0" stroke-width="0.7"/></svg>
<svg style="position:absolute;left:165.8px;top:393.3px;" width="7" height="7" viewBox="0 0 7 7"><path d="M0.8 6 L5.8 0.8" stroke="#e2684b" stroke-width="1.6" stroke-linecap="round"/><path d="M0.2 6.8 L0.6 5.4 L1.6 6.4Z" fill="#e2684b"/></svg>
<div style="position:absolute;left:12.5px;top:430.9px;width:200.5px;height:0.8px;background:#f0f0f0"></div>
<div style="position:absolute;left:21.1px;top:437.1px;width:21px;height:21px;background:#ee9150;border-radius:50%"></div>
<div class="t" style="left:21.20px;top:444px;font-size:9.6px;color:#fff;font-weight:400;width:21px;text-align:center">W</div>
<div class="t" style="left:51.10px;top:439px;font-size:8.15px;color:#333;font-weight:400;">Wilson Dorwart</div>
<div class="t" style="right:819.80px;text-align:right;top:441px;font-size:6.6px;color:#999;font-weight:400;">11:05 AM</div>
<div class="t" style="left:51.10px;top:451px;font-size:7.75px;color:#3a3a3a;font-weight:400;">Your Alphacorp Styleguide</div>
<div class="t" style="left:51.10px;top:463px;font-size:7.6px;color:#a8a8a8;font-weight:400;">&#8377; 100 Thanks for choosing uber</div>
<svg style="position:absolute;left:195.6px;top:462.0px;" width="9" height="9" viewBox="0 0 9 9"><path d="M4.5 0.6 L5.7 3.2 L8.4 3.5 L6.4 5.3 L6.9 8 L4.5 6.6 L2.1 8 L2.6 5.3 L0.6 3.5 L3.3 3.2Z" fill="none" stroke="#a0a0a0" stroke-width="0.7"/></svg>
<div style="position:absolute;left:12.5px;top:478.0px;width:200.5px;height:0.8px;background:#f0f0f0"></div>
<div style="position:absolute;left:21.1px;top:484.2px;width:21px;height:21px;background:#b06b44;border-radius:50%"></div>
<div class="t" style="left:21.20px;top:491px;font-size:9.6px;color:#fff;font-weight:400;width:21px;text-align:center">A</div>
<div class="t" style="left:51.10px;top:486px;font-size:8.15px;color:#333;font-weight:400;">Ahmad Culhane</div>
<div class="t" style="right:819.80px;text-align:right;top:488px;font-size:6.6px;color:#999;font-weight:400;">Sept 3</div>
<div class="t" style="left:51.10px;top:498px;font-size:7.75px;color:#3a3a3a;font-weight:400;">Send across the Mumbai bills</div>
<div class="t" style="left:51.10px;top:510px;font-size:7.6px;color:#a8a8a8;font-weight:400;">We should have a meeting for the...</div>
<svg style="position:absolute;left:195.6px;top:509.09999999999997px;" width="9" height="9" viewBox="0 0 9 9"><path d="M4.5 0.6 L5.7 3.2 L8.4 3.5 L6.4 5.3 L6.9 8 L4.5 6.6 L2.1 8 L2.6 5.3 L0.6 3.5 L3.3 3.2Z" fill="none" stroke="#a0a0a0" stroke-width="0.7"/></svg>
<div style="position:absolute;left:0px;top:230px;width:1.2px;height:3px;background:#7a7a7a"></div>
<div style="position:absolute;left:0px;top:245.6px;width:1.2px;height:19.4px;background:#7a7a7a"></div>
<div style="position:absolute;left:0px;top:300px;width:1.2px;height:6.8px;background:#7a7a7a"></div>
<div style="position:absolute;left:0px;top:183.4px;width:1.6px;height:48px;background:#858585"></div>
</body></html>
